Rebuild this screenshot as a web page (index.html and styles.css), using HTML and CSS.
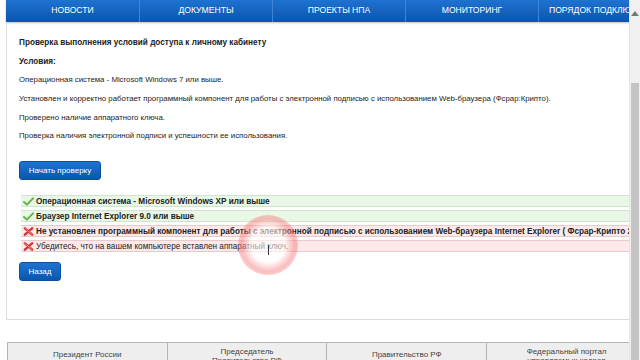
FILE: index.html
```html
<!DOCTYPE html>
<html lang="ru">
<head>
    <meta charset="UTF-8">
    <link rel="stylesheet" href="styles.css">
</head>
<body>
    <div class="window">
        <div class="page">
            <ul class="nav">
                <li>Новости</li>
                <li>Документы</li>
                <li>Проекты НПА</li>
                <li>Мониторинг</li>
                <li>Порядок подключения</li>
            </ul>

            <div class="panel">
                <p class="title">Проверка выполнения условий доступа к личному кабинету</p>
                <p class="title">Условия:</p>
                <p>Операционная система - Microsoft Windows 7 или выше.</p>
                <p>Установлен и корректно работает программный компонент для работы с электронной подписью с использованием Web-браузера (Фсрар:Крипто).</p>
                <p>Проверено наличие аппаратного ключа.</p>
                <p>Проверка наличия электронной подписи и успешности ее использования.</p>

                <button class="btn btn-check">Начать проверку</button>

                <ul class="results">
                    <li class="ok">
                        <svg class="icon" viewBox="0 0 12 10"><path d="M1 5.5 L4.2 8.5 L11 1.5" fill="none" stroke="#66b04a" stroke-width="2.2" stroke-linecap="round" stroke-linejoin="round"/></svg>
                        <b>Операционная система - Microsoft Windows XP или выше</b>
                    </li>
                    <li class="ok">
                        <svg class="icon" viewBox="0 0 12 10"><path d="M1 5.5 L4.2 8.5 L11 1.5" fill="none" stroke="#66b04a" stroke-width="2.2" stroke-linecap="round" stroke-linejoin="round"/></svg>
                        <b>Браузер Internet Explorer 9.0 или выше</b>
                    </li>
                    <li class="fail">
                        <svg class="icon" viewBox="0 0 12 10"><path d="M2 1.5 L10 8.5 M10 1.5 L2 8.5" fill="none" stroke="#d8373a" stroke-width="2.8" stroke-linecap="round"/><path d="M2 1.5 L10 8.5" stroke="#f29a9a" stroke-width="0.8" stroke-linecap="round"/></svg>
                        <b>Не установлен программный компонент для работы с электронной подписью с использованием Web-браузера Internet Explorer ( Фсрар-Крипто 2.0 )</b>
                    </li>
                    <li class="fail">
                        <svg class="icon" viewBox="0 0 12 10"><path d="M2 1.5 L10 8.5 M10 1.5 L2 8.5" fill="none" stroke="#d8373a" stroke-width="2.8" stroke-linecap="round"/><path d="M2 1.5 L10 8.5" stroke="#f29a9a" stroke-width="0.8" stroke-linecap="round"/></svg>
                        Убедитесь, что на вашем компьютере вставлен аппаратный ключ.
                    </li>
                </ul>

                <button class="btn btn-back">Назад</button>
            </div>

            <table class="footer">
                <tr>
                    <td>Президент России</td>
                    <td>Председатель<br>Правительства РФ</td>
                    <td>Правительство РФ</td>
                    <td>Федеральный портал<br>управляемых кадров</td>
                </tr>
            </table>

            <!-- click highlight from the screen recording -->
            <div class="click-ring"></div>
            <div class="cursor"></div>
        </div>

        <div class="scrollbar">
            <div class="arrow"></div>
            <div class="thumb"></div>
        </div>
    </div>
</body>
</html>
```

FILE: styles.css
```css
html, body {
    margin: 0;
    padding: 0;
    height: 100%;
    overflow: hidden;
}

body {
    font-family: "Liberation Sans", Arial, sans-serif;
    color: #222;
    background-color: #fff;
}

.window {
    display: flex;
    height: 360px;
}

.page {
    flex: 1;
    position: relative;
    overflow: hidden;
    padding-left: 6px;
}

.nav {
    display: flex;
    list-style: none;
    margin: 0;
    padding: 0;
    width: 665px;
    height: 22px;
    background: linear-gradient(#1f72d0, #0b55ae);
    box-shadow: 0 1px 2px rgba(0, 0, 0, 0.25);
}

.nav li {
    width: 133px;
    flex-shrink: 0;
    text-align: center;
    color: #fff;
    font-size: 8.6px;
    line-height: 21px;
    text-transform: uppercase;
    white-space: nowrap;
    border-left: 1px solid #3f86d8;
    box-sizing: border-box;
}

.nav li:first-child {
    border-left: none;
}

.panel {
    width: 640px;
    height: 298px;
    box-sizing: border-box;
    border: 1px solid #dcdcdc;
    border-top: none;
    padding: 15px 0 0 12px;
    font-size: 7.8px;
}

.panel p {
    margin: 0 0 6.7px;
    line-height: 12px;
    white-space: nowrap;
}

.panel .title {
    font-weight: bold;
    font-size: 8.2px;
}

.btn {
    display: block;
    border: 1px solid #0c4f9e;
    border-radius: 3px;
    background: linear-gradient(#1e74d2, #0b56ae);
    color: #fff;
    font-family: "Liberation Sans", Arial, sans-serif;
    font-size: 8px;
    height: 19px;
    padding: 0;
    white-space: nowrap;
    cursor: pointer;
}

.btn-check {
    margin-top: 19px;
    width: 82px;
}

.btn-back {
    margin-top: 10px;
    width: 42px;
}

.results {
    list-style: none;
    margin: 15px 0 0 2px;
    padding: 0;
    width: 700px;
}

.results li {
    display: flex;
    align-items: center;
    gap: 2px;
    height: 10px;
    margin-bottom: 3px;
    padding-left: 2px;
    white-space: nowrap;
    font-size: 8.2px;
    border-top: 1px solid;
    border-bottom: 1px solid;
}

.results .ok {
    background-color: #e9f7e7;
    border-color: #cfe6cc;
}

.results .fail {
    background-color: #fde9e9;
    border-color: #e8caca;
}

.icon {
    width: 11px;
    height: 9px;
    flex-shrink: 0;
}

.footer {
    margin-top: 22px;
    margin-left: 1px;
    border-collapse: collapse;
    width: 640px;
    font-size: 8px;
    color: #444;
}

.footer td {
    width: 158px;
    height: 24px;
    vertical-align: top;
    text-align: center;
    padding-top: 4px;
    line-height: 9px;
    background-color: #eeeeee;
    border: 1px solid #b5b5b5;
}

.footer td:first-child {
    padding-top: 7px;
}

.footer td:nth-child(3) {
    padding-top: 7px;
}

.click-ring {
    position: absolute;
    left: 238px;
    top: 215px;
    width: 60px;
    height: 60px;
    border-radius: 50%;
    background: radial-gradient(circle, rgba(255, 255, 255, 0.55) 0%, rgba(255, 255, 255, 0.6) 40%, rgba(245, 110, 110, 0.45) 62%, rgba(255, 200, 200, 0) 100%);
}

.cursor {
    position: absolute;
    left: 268px;
    top: 245px;
    width: 1px;
    height: 10px;
    background-color: #333;
}

.scrollbar {
    width: 10px;
    display: flex;
    flex-direction: column;
    background-color: #f0f0f0;
    border-left: 1px solid #e4e4e4;
}

.arrow {
    height: 8px;
    margin-top: 2px;
    text-align: center;
}

.arrow::before {
    content: "";
    display: inline-block;
    border-left: 4px solid transparent;
    border-right: 4px solid transparent;
    border-bottom: 5px solid #777;
}

.thumb {
    margin: 73px 1px 0;
    flex: 1;
    background-color: #c4c4c4;
}
```
